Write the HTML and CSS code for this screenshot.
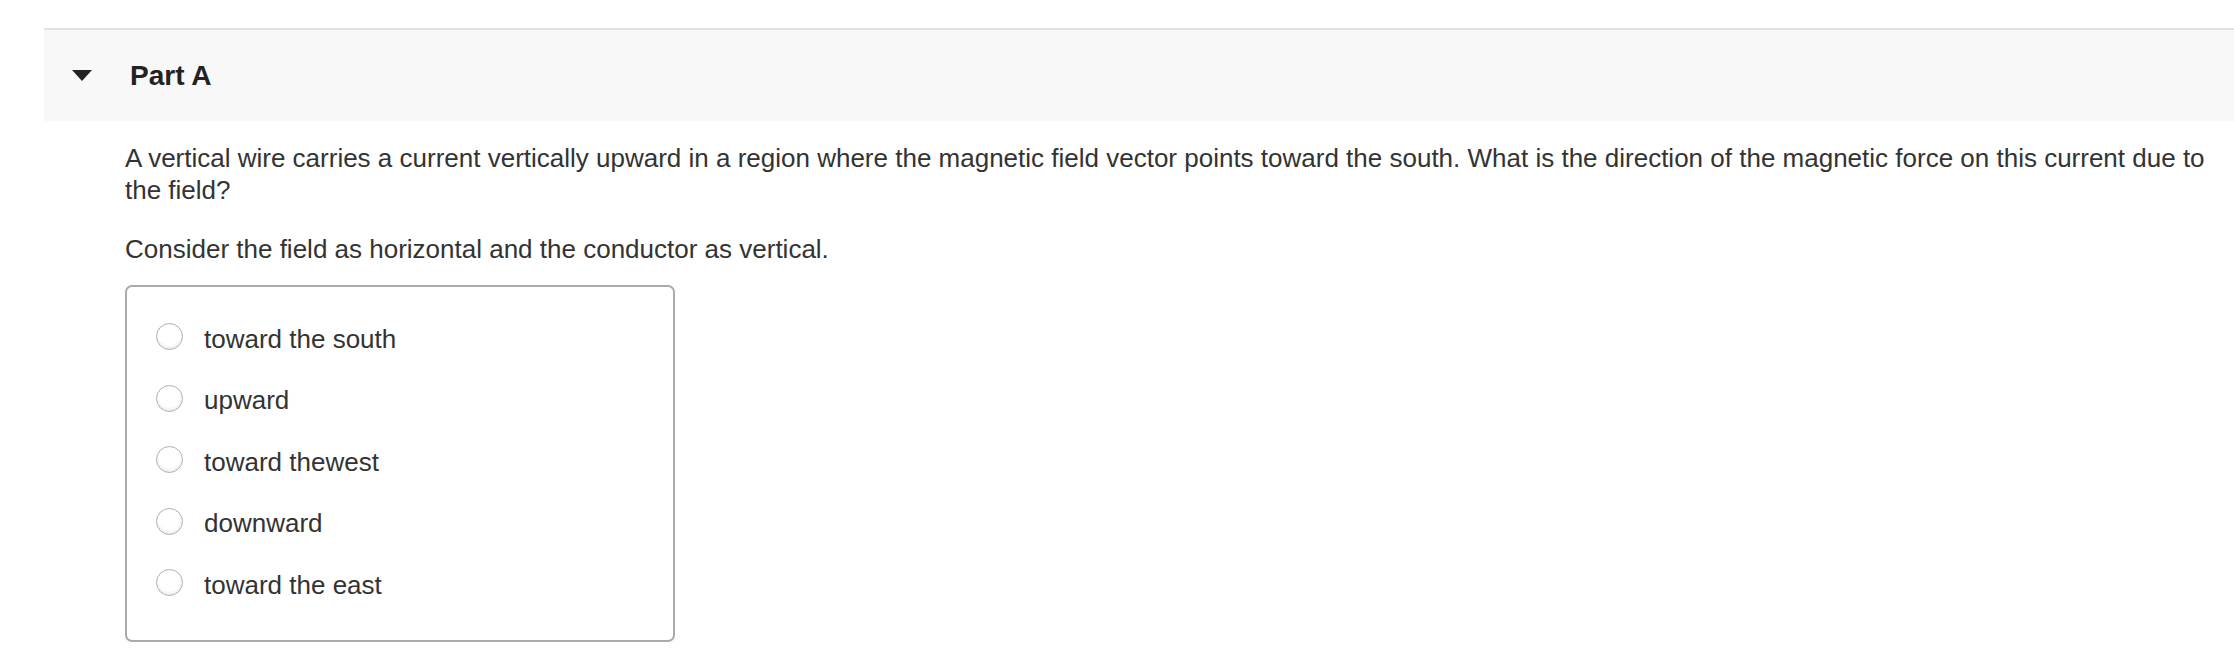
FILE: index.html
```html
<!DOCTYPE html>
<html>
<head lang="en">
    <meta charset="utf-8">
    <title>Part A</title>
    <link rel="stylesheet" href="styles.css">
</head>
<body>
<div class="part">
    <div class="part-head">
        <span class="caret"></span>
        <h2 class="part-title">Part A</h2>
    </div>
    <div class="part-body">
        <p class="question">A vertical wire carries a current vertically upward in a region where the magnetic field vector points toward the south. What is the direction of the magnetic force on this current due to the field?</p>
        <p class="hint">Consider the field as horizontal and the conductor as vertical.</p>
        <div class="choices">
            <label class="choice"><span class="radio"></span><span class="txt">toward the south</span></label>
            <label class="choice"><span class="radio"></span><span class="txt">upward</span></label>
            <label class="choice"><span class="radio"></span><span class="txt">toward thewest</span></label>
            <label class="choice"><span class="radio"></span><span class="txt">downward</span></label>
            <label class="choice"><span class="radio"></span><span class="txt">toward the east</span></label>
        </div>
    </div>
</div>
</body>
</html>
```

FILE: styles.css
```css
body {
    margin: 0;
    font-family: "Liberation Sans", Arial, sans-serif;
    color: #333;
    background: #fff;
}

.part {
    margin: 28px 0 0 44px;
    border-top: 2px solid #e2e2e2;
}

.part-head {
    display: flex;
    align-items: center;
    height: 91px;
    padding-left: 28px;
    background: #f8f8f8;
}

.caret {
    width: 0;
    height: 0;
    border-left: 10px solid transparent;
    border-right: 10px solid transparent;
    border-top: 11px solid #222;
    margin-right: 38px;
}

.part-title {
    margin: 0;
    font-size: 28px;
    font-weight: bold;
    color: #222;
}

.part-body {
    padding: 21px 20px 0 81px;
}

.part-body p {
    margin: 0;
    font-size: 26px;
    line-height: 32px;
}

.part-body .question {
    margin-bottom: 27px;
}

.part-body .hint {
    margin-bottom: 20px;
}

.choices {
    box-sizing: border-box;
    width: 550px;
    height: 357px;
    padding-top: 19px;
    border: 2px solid #aaa;
    border-radius: 7px;
    display: flex;
    flex-direction: column;
}

.choice {
    display: flex;
    align-items: center;
    height: 61.5px;
    padding-left: 29px;
    font-size: 26px;
}

.radio {
    width: 27px;
    height: 27px;
    box-sizing: border-box;
    border-radius: 50%;
    border: 1px solid #aeaeae;
    background: #fff;
    box-shadow: inset 0 -2px 3px rgba(0, 0, 0, 0.08);
    margin-right: 21px;
}

.txt {
    padding-top: 5px;
}
```
